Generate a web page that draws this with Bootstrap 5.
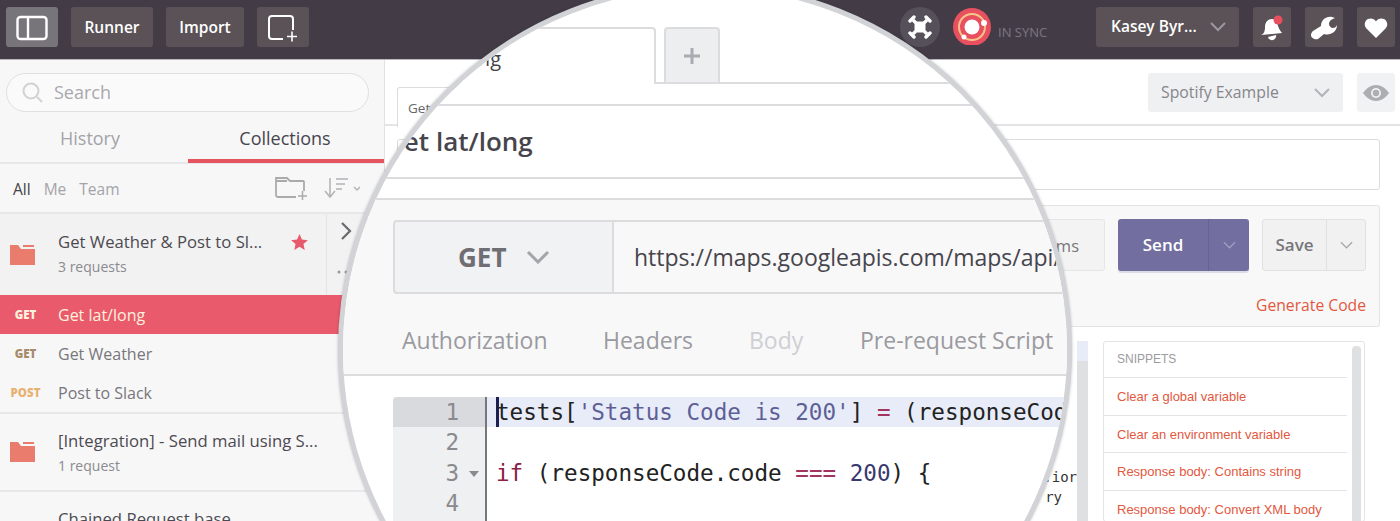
<!DOCTYPE html>
<html lang="en"><head><meta charset="utf-8"><title>Postman</title>
<link href="https://cdn.jsdelivr.net/npm/bootstrap@5.3.0/dist/css/bootstrap.min.css" rel="stylesheet">
<style>
html,body{margin:0;height:521px;overflow:hidden;background:#fff}
body{font-family:"Open Sans","Noto Sans",sans-serif;color:#444}
.shell{position:relative;width:1400px;height:521px;overflow:hidden;background:#fff}
.topbar{height:60px;background:#433c47;padding:7px 5px 0 6px;border-bottom:1px solid #b9b8bc}
.tbtn{height:40px;background:#5a5257;border-radius:3px;color:#fff;font-weight:600;font-size:15.5px;padding-top:1px}
.tbtn.wide1{width:52px;background:#77747a}
.tbtn.run{width:82px;margin-left:13px}
.tbtn.imp{width:78px;margin-left:13px}
.tbtn.newb{width:52px;margin-left:13px}
.tbtn.sq{width:38px;margin-left:14px}
.tbtn.usr{width:143px;margin-left:48px;padding:0 13px 0 15px;font-size:15.5px}
.sat{width:40px;height:40px;border-radius:50%;background:#56505a;margin-right:13px}
.syncwrap{width:38px;height:38px;margin-right:7px}
.synctx{font-size:13px;color:#7c7780;width:50px;white-space:nowrap}
.bodyrow{height:461px}
.side{width:385px;flex:none;background:#f7f7f8;border-right:1px solid #e2e2e4;height:461px;overflow:hidden}
.srch{margin:13px 0 0 6px;width:363px;height:39px;border:1px solid #e0e0e2;border-radius:20px;background:#fafafb;color:#a9a9ad;font-size:18px;padding-left:15px;gap:10px}
.stabs{height:52px;border-bottom:2px solid #e8e8ea;font-size:18px}
.stab1{width:180px;text-align:center;color:#a3a3a8;padding-top:13px;margin-right:8px}
.stab2{width:196px;text-align:center;color:#47454c;padding:13px 2px 0 0;border-bottom:4px solid #e5555f;height:51px}
.filt{height:50px;border-bottom:2px solid #e8e8ea;font-size:15.500px;padding:3px 24px 0 13px;color:#a3a3a8}
.filt .on{color:#444;margin-right:13px}.filt .m2{margin-right:13px}
.filt svg{margin-top:-3px}
.coll{height:81px}
.coll1{background:#f2f2f3}
.colmain{width:327px;flex:none;padding-left:10px;border-right:1px solid #e4e4e6;height:81px}
.ctitle{font-size:16.700px;color:#4c4a50;line-height:24px;white-space:nowrap}
.csub{font-size:14px;color:#8b8a8f;line-height:26px}
.ctext{margin-left:23px;padding-top:16px}
.starpad{width:18px;flex:none}
.side-r{width:57px;padding:8px 0 0 13px;color:#777}
.dots{display:block;margin:30px 0 0 -3px}
.reqrow{height:39px;font-size:16px;color:#77767b}
.reqrow.act{background:#e85a6c;color:#fff2dd;margin-bottom:0}
.meth{width:58px;flex:none;text-align:center;font-size:11.500px;font-weight:800;padding-right:7px}
.mget{color:#a78c6c}.mpost{color:#e8b273}
.act .meth{color:#fff2dd}
.sep{border-bottom:2px solid #e8e8ea}
.integ{height:78px;padding-left:10px}
.intx{margin-left:23px;padding-top:3px}
.chain{padding:15px 0 0 58px}
.mn{flex:1 1 0;min-width:0;background:#fff}
.mtabs{height:66px;border-bottom:2px solid #e4e4e6;padding:13px 5px 0 12px}
.smalltab{width:120px;height:40px;border:1px solid #dcdcde;border-bottom:0;border-radius:3px 3px 0 0;margin-top:14px;background:#fff;font-size:13.500px;padding:10px 0 0 10px;color:#666}
.envsel{width:195px;height:39px;background:#eff0f2;border-radius:3px;font-size:15.800px;color:#86858a;padding:0 13px 0 13px}
.eyeb{width:38px;height:39px;background:#f1f2f4;border-radius:3px;margin-left:14px}
.namewrap{height:79px;padding:13px 20px 15px 12px}
.namebox{height:51px;border:1px solid #dcdcde;border-radius:3px}
.reqp{height:122px;width:995px;border:1px solid #e3e3e5;border-left:0;background:#f8f8f9;padding:13px 13px 0 0;border-radius:0 3px 3px 0}
.parb{width:120px;height:52px;border:1px solid #e6e6e8;border-radius:3px;background:#f3f3f4;font-size:16.500px;color:#777;text-align:right;padding:14px 25px 0 0}
.sendb{width:131px;height:52px;border-radius:3px;background:#726e9f;color:#fff;margin-left:13px;font-weight:600;font-size:17px;box-shadow:0 2px 0 #dcdbe8}
.sendb .l{width:91px;text-align:center;border-right:1px solid #676391;line-height:52px}
.saveb{width:104px;height:52px;border-radius:3px;border:1px solid #e1e1e3;background:#f1f1f2;color:#77767b;margin-left:13px;font-weight:600;font-size:17px}
.saveb .l{width:64px;text-align:center;border-right:1px solid #e1e1e3;line-height:50px}
.gen{color:#e2583e;font-size:15.700px;margin-top:23px;line-height:22px}
.lower{height:195px;padding:14px 35px 0 0;width:1015px}
.edpart{flex:1 1 0;min-width:0;font-family:"DejaVu Sans Mono",monospace;font-size:14px;color:#333;text-align:right;padding-top:126px;line-height:20px}
.edline2{padding-right:15px}
.edbar{width:11px;flex:none;background:#dfe0e2;margin:0 15px 0 0;border-radius:2px 2px 0 0;position:relative}
.edbar:before{content:"";display:block;height:20px;background:#e8ecf8}
.snip{width:262px;flex:none;border:1px solid #e4e4e6;border-radius:3px;font-family:"Liberation Sans",Arial,sans-serif;padding-right:17px;position:relative}
.snip .item{border-bottom:1px solid #e4e4e6;height:37.700px;line-height:37px;font-size:13px;color:#e2583e;padding-left:13px;white-space:nowrap}
.snip .head{height:36px;color:#9b9ba0;font-size:12px;line-height:35px}
.sbar{position:absolute;right:3px;top:4px;bottom:0;width:9px;background:#dfe0e2;border-radius:4px 4px 0 0}
.lens{position:absolute;left:338px;top:-17px;width:734px;height:734px;border-radius:50%;border:5px solid #d2d3d6;background:#fff;overflow:hidden;box-shadow:0 0 3px rgba(40,40,50,.3);padding-top:39px;z-index:5}
.ltabs{height:57px;border-bottom:2px solid #dcdcde}
.ltab1{width:313px;height:57px;flex:none;background:#fff;border-right:2px solid #dcdcde;border-top:2px solid #dcdcde;border-radius:0 4px 0 0;margin-bottom:-2px;text-align:right;padding:15px 153px 0 0;font-size:20px;color:#444}
.ltab2{width:56px;height:55px;flex:none;margin-left:8px;background:#eceef0;border:2px solid #dcdcde;border-bottom:0;border-radius:4px 4px 0 0}
.lname{margin-top:20px;height:75px;border-top:2px solid #dcdcde;border-bottom:2px solid #dcdcde;padding-left:42px;font-size:26px;font-weight:600;color:#47454c;line-height:71px;white-space:nowrap}
.lpanel{margin-top:19px;height:178px;border-top:2px solid #dcdcde;border-bottom:2px solid #dcdcde;background:#f8f8f9;padding:20px 0 0 50px}
.urlbox{height:74px;border:2px solid #dcdcde;border-right:0;border-radius:4px 0 0 4px;background:#f1f2f3}
.methb{width:219px;flex:none;font-size:26px;font-weight:700;color:#6f6e73;padding-left:63px;gap:20px;border-right:2px solid #dcdcde}
.urlt{padding-left:20px;font-size:23px;color:#47454c;white-space:nowrap;background:#f8f8f9;flex:1 1 0;height:100%}
.ltabsb{height:80px;padding:30px 0 0 9px;font-size:23px;color:#9a9a9f;white-space:nowrap;line-height:32px}
.lt-a{width:201px}.lt-h{width:146px}.lt-b{width:111px;color:#cfcfd3}
.editor{margin:21px 0 0 50px;font-family:"DejaVu Sans Mono",monospace;font-size:22.600px;line-height:30.400px}
.gut{width:94px;flex:none;background:#eff0f2;border-right:2px solid #77767b;color:#8a8a8e;border-radius:4px 0 0 0;height:140px}
.gl{padding-right:26px;text-align:right;height:30.400px;position:relative}
.gl.cur{background:#d9dadd;border-radius:4px 0 0 0}
.fold{position:absolute;right:6px;top:13px;width:0;height:0;border:5px solid transparent;border-top:6px solid #8a8a8e}
.code{flex:1 1 0;min-width:0;white-space:pre;color:#222}
.cl{height:30.400px;padding-left:9px}
.cl.cur{background:#e8ecf8}
.bar{display:inline-block;width:3px;height:30px;background:#1b2050;margin-right:-3px;vertical-align:top}
.s{color:#5d5f97}.o{color:#a3345e}.k{color:#8a2043}.n{color:#38396f}
</style></head><body>
<div class="shell">
<div class="topbar d-flex">
  <div class="tbtn wide1 d-flex align-items-center justify-content-center"><svg width="32" height="26" viewBox="0 0 32 26" fill="none" stroke="#fff" stroke-width="2.400"><rect x="1.500" y="2" width="29" height="22" rx="3"/><path d="M12 2v22"/></svg></div>
  <div class="tbtn run d-flex align-items-center justify-content-center">Runner</div>
  <div class="tbtn imp d-flex align-items-center justify-content-center">Import</div>
  <div class="tbtn newb d-flex align-items-center justify-content-center"><svg width="32" height="28" viewBox="0 0 32 28" fill="none" stroke="#fff" stroke-width="2"><path d="M16 25H5a3 3 0 0 1-3-3V5a3 3 0 0 1 3-3h18a3 3 0 0 1 3 3v11"/><path d="M20 22.500h10M25 17.500v10" stroke-width="1.600"/></svg></div>
  <div class="flex-grow-1"></div>
  <div class="sat d-flex align-items-center justify-content-center"><svg width="24" height="24" viewBox="0 0 24 24" fill="#fff" stroke="#fff"><rect x="7" y="7" width="10" height="10" rx="2.500"/><path d="M9 9 5 5M15 9l4-4M9 15l-4 4M15 15l4 4" stroke-width="3.200"/><path d="M2 6l4-4M18 2l4 4M2 18l4 4M18 22l4-4" stroke-width="3.400" stroke-linecap="round"/></svg></div>
  <div class="syncwrap"><svg width="38" height="38" viewBox="0 0 38 38" fill="none"><circle cx="19" cy="20" r="19" fill="#e8505f"/><circle cx="19" cy="20" r="13" stroke="#f7c58a" stroke-width="2"/><circle cx="19" cy="20" r="7.500" fill="#fff"/><circle cx="31" cy="16" r="3" fill="#fff"/><circle cx="11" cy="30" r="2.500" fill="#fff"/></svg></div>
  <div class="synctx d-flex align-items-center">IN SYNC</div>
  <div class="tbtn usr d-flex align-items-center justify-content-between"><span>Kasey Byr...</span><svg width="16" height="10" viewBox="0 0 16 10" fill="none" stroke="#9c979f" stroke-width="2"><path d="m1 1 7 7 7-7"/></svg></div>
  <div class="tbtn sq d-flex align-items-center justify-content-center"><svg width="24" height="26" viewBox="0 0 24 26"><path d="M1 20c3-1 4-4 4-8 0-5 3-8 7-8 2 0 4 1 5 3 1 4 2 8 5 11z" fill="#fff"/><path d="M8 22l8-2a3.500 3.500 0 0 1-8 2z" fill="#fff"/><circle cx="18" cy="5" r="4.500" fill="#e8505f"/></svg></div>
  <div class="tbtn sq d-flex align-items-center justify-content-center"><svg width="28" height="24" viewBox="0 0 28 24"><path d="M27 9c0 7-7 11-13 9l-6 5c-3 1-7-1-7-4 0-2 1-3 2-4l8-5C11 4 16 0 22 1c1 0 2 1 3 1-3 1-6 3-6 6 0 2 2 4 4 4 2 0 3-1 4-3z" fill="#fff"/></svg></div>
  <div class="tbtn sq d-flex align-items-center justify-content-center"><svg width="24" height="22" viewBox="0 0 24 22"><path d="M12 21 2.500 11.500C-1 8 1 1.500 6.500 1.500c2.500 0 4.500 1 5.500 3 1-2 3-3 5.500-3C23 1.500 25 8 21.500 11.500z" fill="#fff"/></svg></div>
</div>
<div class="bodyrow d-flex">
  <div class="side">
    <div class="srch d-flex align-items-center"><svg width="22" height="22" viewBox="0 0 22 22" fill="none" stroke="#d2d2d5" stroke-width="2"><circle cx="9" cy="9" r="7.500"/><path d="m15 15 5 5"/></svg><span>Search</span></div>
    <div class="stabs d-flex"><div class="stab1">History</div><div class="stab2">Collections</div></div>
    <div class="filt d-flex align-items-center"><span class="on">All</span><span class="m2">Me</span><span>Team</span>
      <span class="flex-grow-1"></span>
      <svg width="34" height="26" viewBox="0 0 34 26" fill="none" stroke="#aaa" stroke-width="1.800"><path d="M22 22H4a2 2 0 0 1-2-2V3h11l3 3h13a1 1 0 0 1 1 1v9M2 6h11"/><path d="M24 21h9M28.500 16v9" stroke-width="1.500"/></svg>
      <svg class="ms-3" width="36" height="24" viewBox="0 0 36 24" fill="none" stroke="#b3b3b6" stroke-width="1.500"><path d="M6 2v18M1 15l5 6 5-6M12 3h12M12 8h9M12 13h6"/><path d="m30 11 3 3 3-3"/></svg>
    </div>
    <div class="coll coll1 d-flex">
      <div class="colmain d-flex align-items-center"><svg width="25" height="20" viewBox="0 0 25 20"><path d="M0 0h8l3 4h14v16H0z" fill="#e97c6c"/><path d="M13 0h11v2H13z" fill="#e97c6c"/></svg>
        <div class="ctext flex-grow-1 align-self-start"><div class="ctitle d-flex"><span>Get Weather &amp; Post to Sl...</span><svg class="ms-auto mt-1" width="17" height="16" viewBox="0 0 24 23"><path d="m12 0 3.500 8 8.500 1-6.300 5.500L19.500 23 12 18.500 4.500 23l1.800-8.500L0 9l8.500-1z" fill="#e8596b"/></svg><span class="starpad"></span></div><div class="csub">3 requests</div></div>
      </div>
      <div class="side-r"><svg class="d-block" width="12" height="18" viewBox="0 0 12 18" fill="none" stroke="#6a6a6e" stroke-width="2.200"><path d="m2 1 8 8-8 8"/></svg><svg class="dots" width="16" height="4" viewBox="0 0 16 4" fill="#9a9a9e"><circle cx="2" cy="2" r="1.500"/><circle cx="9" cy="2" r="1.500"/></svg></div>
    </div>
    <div class="reqrow act d-flex align-items-center"><span class="meth">GET</span><span>Get lat/long</span></div>
    <div class="reqrow d-flex align-items-center"><span class="meth mget">GET</span><span>Get Weather</span></div>
    <div class="reqrow d-flex align-items-center"><span class="meth mpost">POST</span><span>Post to Slack</span></div>
    <div class="sep"></div>
    <div class="integ d-flex align-items-center sep">
      <svg width="25" height="20" viewBox="0 0 25 20"><path d="M0 0h8l3 4h14v16H0z" fill="#e97c6c"/><path d="M13 0h11v2H13z" fill="#e97c6c"/></svg>
      <div class="intx"><div class="ctitle">[Integration] - Send mail using S...</div><div class="csub">1 request</div></div>
    </div>
    <div class="ctitle chain">Chained Request base</div>
  </div>
  <div class="mn">
    <div class="mtabs d-flex justify-content-between"><div class="smalltab">Get lat/long</div>
      <div class="d-flex"><div class="envsel d-flex align-items-center justify-content-between"><span>Spotify Example</span><svg width="16" height="10" viewBox="0 0 16 10" fill="none" stroke="#b3b3b7" stroke-width="2"><path d="m1 1 7 7 7-7"/></svg></div>
      <div class="eyeb d-flex align-items-center justify-content-center"><svg width="26" height="16" viewBox="0 0 26 16"><path d="M13 0C7 0 3 4 0 8c3 4 7 8 13 8s10-4 13-8c-3-4-7-8-13-8z" fill="#aeaeb2"/><circle cx="13" cy="8" r="5" fill="#eff0f2"/><circle cx="13" cy="8" r="3.200" fill="#aeaeb2"/></svg></div></div>
    </div>
    <div class="namewrap"><div class="namebox"></div></div>
    <div class="reqp">
      <div class="d-flex justify-content-end"><div class="parb">Params</div>
        <div class="sendb d-flex"><div class="l">Send</div><div class="flex-grow-1 d-flex align-items-center justify-content-center"><svg width="13" height="8" viewBox="0 0 14 8" fill="none" stroke="#9f9cc2" stroke-width="1.500"><path d="m1 1 6 6 6-6"/></svg></div></div>
        <div class="saveb d-flex"><div class="l">Save</div><div class="flex-grow-1 d-flex align-items-center justify-content-center"><svg width="13" height="8" viewBox="0 0 14 8" fill="none" stroke="#aaa" stroke-width="1.500"><path d="m1 1 6 6 6-6"/></svg></div></div></div>
      <div class="gen text-end">Generate Code</div>
    </div>
    <div class="lower d-flex">
      <div class="edpart"><div>.ior</div><div class="edline2">ry</div></div>
      <div class="edbar"></div>
      <div class="snip"><div class="sbar"></div>
        <div class="item head">SNIPPETS</div>
        <div class="item">Clear a global variable</div>
        <div class="item">Clear an environment variable</div>
        <div class="item">Response body: Contains string</div>
        <div class="item">Response body: Convert XML body</div>
      </div>
    </div>
  </div>
</div>
<div class="lens">
  <div class="ltabs d-flex"><div class="ltab1">Get lat/long</div><div class="ltab2 d-flex align-items-center justify-content-center"><svg width="16" height="16" viewBox="0 0 16 16"><path d="M6.500 0h3v6.500H16v3H9.500V16h-3V9.500H0v-3h6.500z" fill="#a9abb0"/></svg></div></div>
  <div class="lname">Get lat/long</div>
  <div class="lpanel">
    <div class="urlbox d-flex align-items-center"><div class="methb d-flex align-items-center h-100"><span>GET</span><svg width="24" height="14" viewBox="0 0 24 14" fill="none" stroke="#a5a5a9" stroke-width="3"><path d="m2 2 10 10L22 2"/></svg></div><div class="urlt d-flex align-items-center">https://maps.googleapis.com/maps/api/geocode/json</div></div>
    <div class="ltabsb d-flex"><span class="lt-a">Authorization</span><span class="lt-h">Headers</span><span class="lt-b">Body</span><span>Pre-request Script</span></div>
  </div>
  <div class="editor d-flex">
    <div class="gut"><div class="gl cur">1</div><div class="gl">2</div><div class="gl">3<i class="fold"></i></div><div class="gl">4</div></div>
    <div class="code"><div class="cl cur"><span class="bar"></span>tests[<span class="s">'Status Code is 200'</span>] <span class="o">=</span> (responseCode.code</div><div class="cl"></div><div class="cl"><span class="k">if</span> (responseCode.code <span class="o">===</span> <span class="n">200</span>) {</div><div class="cl"></div></div>
  </div>
</div>
</div>
<script src="https://cdn.jsdelivr.net/npm/bootstrap@5.3.0/dist/js/bootstrap.bundle.min.js"></script>
</body></html>
